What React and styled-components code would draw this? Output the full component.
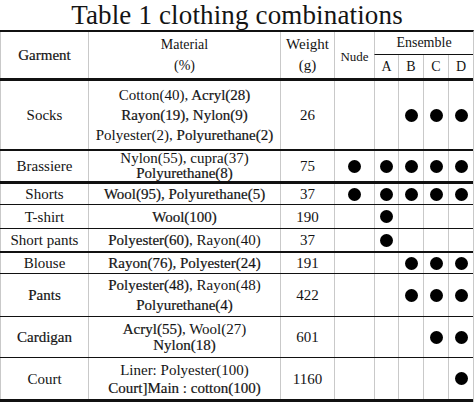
import React from 'react';
import styled, { createGlobalStyle } from 'styled-components';

const GlobalStyle = createGlobalStyle`
  html, body {
    margin: 0;
    padding: 0;
    background: #fff;
  }
  body {
    font-family: "Liberation Serif", "Times New Roman", serif;
    color: #141414;
  }
`;

const COLS = '88px 192px 54px 40px 24px 25px 25px 25px';

const Page = styled.div`
  width: 474px;
  height: 402px;
  overflow: hidden;
`;

const Title = styled.div`
  height: 30px;
  font-size: 27px;
  line-height: 30px;
  letter-spacing: 0.15px;
  text-align: center;
  white-space: nowrap;
`;

const Table = styled.div`
  border-top: 2px solid #111;
  width: 474px;
  box-sizing: border-box;
  border-right: 1px solid #c9c9c9;
`;

const HeaderGrid = styled.div`
  display: grid;
  grid-template-columns: ${COLS};
  grid-template-rows: 23px 23px;
  border-bottom: 3px solid #111;
  font-size: 15px;
`;

const HeadCell = styled.div`
  grid-column: ${p => p.$col};
  grid-row: ${p => p.$row};
  border-left: 1px solid #c9c9c9;
  border-bottom: ${p => (p.$underline ? '1px solid #111' : 'none')};
  display: flex;
  flex-direction: column;
  align-items: center;
  justify-content: center;
  line-height: ${p => p.$lh || 18}px;
  font-size: ${p => p.$size || 15}px;
  padding-top: ${p => p.$pt || 0}px;
  box-sizing: border-box;
  text-align: center;
`;

const Row = styled.div`
  display: grid;
  grid-template-columns: ${COLS};
  height: ${p => p.$h}px;
  border-bottom: ${p => p.$b}px solid #111;
  font-size: 15px;
`;

const Cell = styled.div`
  border-left: 1px solid #c9c9c9;
  display: flex;
  flex-direction: column;
  align-items: center;
  justify-content: center;
  text-align: center;
  white-space: nowrap;
  line-height: ${p => p.$lh || 18}px;
`;

const Heavy = styled.span`
  -webkit-text-stroke: 0.2px currentColor;
`;

const Dot = styled.span`
  width: 13px;
  height: 13px;
  border-radius: 50%;
  background: #000;
  display: block;
`;

const rows = [
  {
    name: 'Socks', h: 68, b: 2, lh: 20, weight: '26', marks: [0, 0, 1, 1, 1],
    material: [
      <>Cotton(40), <Heavy>Acryl(28)</Heavy></>,
      <Heavy>Rayon(19), Nylon(9)</Heavy>,
      <>Polyester(2), <Heavy>Polyurethane(2)</Heavy></>,
    ],
  },
  {
    name: 'Brassiere', h: 30, b: 3, lh: 15, weight: '75', marks: [1, 1, 1, 1, 1],
    material: [<>Nylon(55), cupra(37)</>, <Heavy>Polyurethane(8)</Heavy>],
  },
  {
    name: 'Shorts', h: 20, b: 1, lh: 18, weight: '37', marks: [1, 1, 1, 1, 1],
    material: [<Heavy>Wool(95), Polyurethane(5)</Heavy>],
  },
  {
    name: 'T-shirt', h: 23, b: 1, lh: 18, weight: '190', marks: [0, 1, 0, 0, 0],
    material: [<Heavy>Wool(100)</Heavy>],
  },
  {
    name: 'Short pants', h: 22, b: 2, lh: 18, weight: '37', marks: [0, 1, 0, 0, 0],
    material: [<><Heavy>Polyester(60)</Heavy>, Rayon(40)</>],
  },
  {
    name: 'Blouse', h: 20, b: 1, lh: 18, weight: '191', marks: [0, 0, 1, 1, 1],
    material: [<Heavy>Rayon(76), Polyester(24)</Heavy>],
  },
  {
    name: 'Pants', heavy: true, h: 42, b: 1, lh: 20, weight: '422', marks: [0, 0, 1, 1, 1],
    material: [<><Heavy>Polyester(48)</Heavy>, Rayon(48)</>, <Heavy>Polyurethane(4)</Heavy>],
  },
  {
    name: 'Cardigan', heavy: true, h: 40, b: 1, lh: 16, weight: '601', marks: [0, 0, 0, 1, 1],
    material: [<><Heavy>Acryl(55)</Heavy>, Wool(27)</>, <Heavy>Nylon(18)</Heavy>],
  },
  {
    name: 'Court', h: 41, b: 3, lh: 18, weight: '1160', marks: [0, 0, 0, 0, 1],
    material: [<>Liner: Polyester(100)</>, <Heavy>Court]Main : cotton(100)</Heavy>],
  },
];

export default function App() {
  return (
    <Page>
      <GlobalStyle />
      <Title>Table 1 clothing combinations</Title>
      <Table>
        <HeaderGrid>
          <HeadCell $col="1" $row="1 / 3"><Heavy>Garment</Heavy></HeadCell>
          <HeadCell $col="2" $row="1 / 3" $lh={21} $size={14}>
            <span>Material</span>
            <span>(%)</span>
          </HeadCell>
          <HeadCell $col="3" $row="1 / 3" $lh={21}>
            <span>Weight</span>
            <span>(g)</span>
          </HeadCell>
          <HeadCell $col="4" $row="1 / 3" $size={13} $pt={3}>Nude</HeadCell>
          <HeadCell $col="5 / 9" $row="1" $underline $size={14}>Ensemble</HeadCell>
          {['A', 'B', 'C', 'D'].map((l, i) => (
            <HeadCell key={l} $col={String(5 + i)} $row="2" $size={14}>{l}</HeadCell>
          ))}
        </HeaderGrid>
        {rows.map(r => (
          <Row key={r.name} $h={r.h} $b={r.b}>
            <Cell>{r.heavy ? <Heavy>{r.name}</Heavy> : r.name}</Cell>
            <Cell $lh={r.lh}>
              {r.material.map((m, i) => (
                <span key={i}>{m}</span>
              ))}
            </Cell>
            <Cell>{r.weight}</Cell>
            {r.marks.map((m, i) => (
              <Cell key={i}>{m ? <Dot /> : null}</Cell>
            ))}
          </Row>
        ))}
      </Table>
    </Page>
  );
}
